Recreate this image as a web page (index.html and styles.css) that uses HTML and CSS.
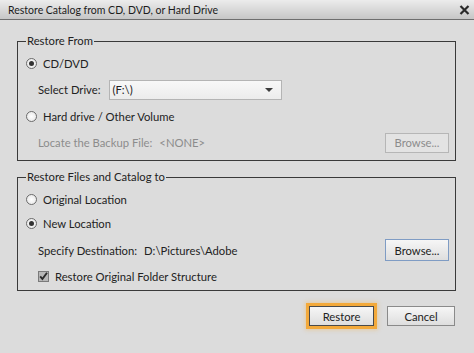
FILE: index.html
```html
<!doctype html>
<html lang="en">
<head>
	<meta charset="UTF-8">
	<title>Restore Catalog</title>
	<link rel="stylesheet" href="styles.css">
</head>
<body>
	<div class="titlebar">
		<span class="title">Restore Catalog from CD, DVD, or Hard Drive</span>
		<svg class="close" width="11" height="10" viewBox="0 0 11 10"><path d="M1.5 1 L9.5 9 M9.5 1 L1.5 9" stroke="#2a2a2a" stroke-width="2.2"/></svg>
	</div>
	<div class="content">
		<fieldset class="group group-from">
			<legend>Restore From</legend>
			<div class="row">
				<span class="radio checked"></span><span>CD/DVD</span>
			</div>
			<div class="row indent">
				<span class="label">Select Drive:</span>
				<div class="select"><span>(F:\)</span><span class="arrow"></span></div>
			</div>
			<div class="row">
				<span class="radio"></span><span>Hard drive / Other Volume</span>
			</div>
			<div class="row indent disabled">
				<span class="label">Locate the Backup File:</span>
				<span>&lt;NONE&gt;</span>
				<button class="btn browse" disabled>Browse...</button>
			</div>
		</fieldset>

		<fieldset class="group group-to">
			<legend>Restore Files and Catalog to</legend>
			<div class="row short">
				<span class="radio"></span><span>Original Location</span>
			</div>
			<div class="row short">
				<span class="radio checked"></span><span>New Location</span>
			</div>
			<div class="row indent tall">
				<span class="label">Specify Destination:</span>
				<span>D:\Pictures\Adobe</span>
				<button class="btn browse active">Browse...</button>
			</div>
			<div class="row indent last">
				<span class="checkbox">
					<svg width="9" height="9" viewBox="0 0 9 9"><path d="M1.2 4.4 L3.4 7 L8 0.8" fill="none" stroke="#2a2a2a" stroke-width="1.9"/></svg>
				</span>
				<span>Restore Original Folder Structure</span>
			</div>
		</fieldset>

		<div class="actions">
			<button class="btn primary">Restore</button>
			<button class="btn">Cancel</button>
		</div>
	</div>
</body>
</html>
```

FILE: styles.css
```css
html,body{
	margin:0;
	padding:0;
}
body{
	width:474px;
	height:353px;
	background:#dcdcdc;
	font-family:Lato,"Liberation Sans",sans-serif;
	font-size:11.25px;
	color:#222;
	overflow:hidden;
}
.titlebar{
	height:19px;
	display:flex;
	align-items:center;
	justify-content:space-between;
	padding:0 4px 0 8px;
	background:linear-gradient(#ececec,#c6c6c6);
	border-bottom:1px solid #6e6e6e;
}
.title{
	font-size:10.5px;
	color:#1c1c1c;
}
.close{
	display:block;
}
.content{
	padding:0 18px 0 17px;
}
.group{
	margin:0;
	border:1px solid #3a3a3a;
	padding:0 6px 4px 8px;
	min-width:0;
}
.group legend{
	padding:0 1px;
	line-height:16px;
}
.group-from{
	margin-top:13px;
	padding-top:1px;
}
.group-to{
	margin-top:8px;
	padding-top:2px;
	padding-bottom:3px;
}
.row{
	height:26.5px;
	display:flex;
	align-items:center;
}
.row.short{
	height:24px;
}
.row.tall{
	height:30px;
}
.row.last{
	height:22px;
}
.indent{
	padding-left:12px;
}
.disabled{
	color:#8c8c8c;
}
.label{
	margin-right:7px;
}
.radio{
	width:9px;
	height:9px;
	border:1px solid #6c6c6c;
	border-radius:50%;
	background:radial-gradient(#ffffff,#e2e2e2);
	margin-right:6px;
	position:relative;
	flex:none;
}
.radio.checked::after{
	content:"";
	position:absolute;
	left:2px;
	top:2px;
	width:5px;
	height:5px;
	border-radius:50%;
	background:#333;
}
.checkbox{
	width:9px;
	height:9px;
	border:1px solid #7a7a7a;
	background:#b8b8b8;
	margin-right:6px;
	display:flex;
	flex:none;
}
.select{
	width:168px;
	height:18px;
	border:1px solid #b4b4b4;
	background:linear-gradient(#f8f8f8,#ececec);
	display:flex;
	align-items:center;
	justify-content:space-between;
	padding:0 0 0 3px;
	box-sizing:content-box;
	margin-left:1px;
}
.arrow{
	width:0;
	height:0;
	border-left:4px solid transparent;
	border-right:4px solid transparent;
	border-top:4px solid #3c3c3c;
	margin-right:8px;
}
.btn{
	font-family:inherit;
	font-size:11.25px;
	color:#222;
	height:20px;
	padding:0;
	border:1px solid #8a8a8a;
	background:linear-gradient(#f6f6f6,#dedede);
	border-radius:0;
}
.browse{
	width:64px;
	margin-left:auto;
}
.browse:disabled{
	color:#8c8c8c;
	border-color:#b6b6b6;
	background:#e3e3e3;
}
.browse.active{
	border-color:#7f9cc4;
	height:22px;
}
.actions{
	display:flex;
	justify-content:flex-end;
	align-items:center;
	gap:13px;
	margin-top:15px;
	padding-right:1px;
}
.actions .btn{
	width:68px;
}
.actions .primary{
	width:65px;
	border-color:#4a4a4a;
	box-shadow:0 0 0 3px #f3a93a,0 0 4px 4px rgba(243,169,58,.35);
}
```
